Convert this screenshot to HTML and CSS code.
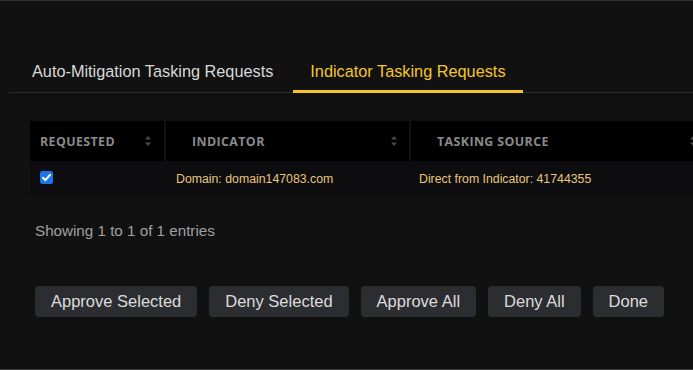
FILE: index.html
```html
<!DOCTYPE html>
<html>
<head>
<meta charset="utf-8">
<link rel="stylesheet" href="styles.css">
</head>
<body>
<div class="page">
  <div class="tabs">
    <div class="tab">Auto-Mitigation Tasking Requests</div>
    <div class="tab active">Indicator Tasking Requests</div>
  </div>
  <div class="table-wrap">
    <table class="grid">
      <colgroup>
        <col class="c1"><col class="c2"><col class="c3">
      </colgroup>
      <thead>
        <tr>
          <th><span class="th-in first">REQUESTED<svg class="sort" width="6" height="12" viewBox="0 0 6 12"><path d="M3 1 L6 4.5 L0 4.5 Z M3 11 L6 7.5 L0 7.5 Z" fill="#4a4a4a"/></svg></span></th>
          <th class="sep"><span class="th-in">INDICATOR<svg class="sort" width="6" height="12" viewBox="0 0 6 12"><path d="M3 1 L6 4.5 L0 4.5 Z M3 11 L6 7.5 L0 7.5 Z" fill="#4a4a4a"/></svg></span></th>
          <th class="sep"><span class="th-in">TASKING SOURCE<svg class="sort" width="6" height="12" viewBox="0 0 6 12"><path d="M3 1 L6 4.5 L0 4.5 Z M3 11 L6 7.5 L0 7.5 Z" fill="#4a4a4a"/></svg></span></th>
        </tr>
      </thead>
      <tbody>
        <tr>
          <td class="d1"><svg class="check" width="13" height="13" viewBox="0 0 13 13"><rect x="0" y="0" width="13" height="13" rx="2.5" fill="#1a74ea"/><path d="M3 6.8 L5.4 9.2 L10 3.8" stroke="#fff" stroke-width="2" fill="none" stroke-linecap="round" stroke-linejoin="round"/></svg></td>
          <td class="d2">Domain: domain147083.com</td>
          <td class="d3">Direct from Indicator: 41744355</td>
        </tr>
      </tbody>
    </table>
  </div>
  <div class="info">Showing 1 to 1 of 1 entries</div>
  <div class="actions">
    <button class="btn">Approve Selected</button>
    <button class="btn">Deny Selected</button>
    <button class="btn">Approve All</button>
    <button class="btn">Deny All</button>
    <button class="btn">Done</button>
  </div>
</div>
</body>
</html>
```
FILE: styles.css
```css
html, body {
  margin: 0;
  padding: 0;
  background: #111111;
}
body {
  width: 693px;
  height: 370px;
  overflow: hidden;
  font-family: "Liberation Sans", Arial, sans-serif;
}
.page {
  box-sizing: border-box;
  height: 370px;
  border-top: 1px solid #2e2e2e;
  border-bottom: 1px solid #3a3a3a;
  background: #111111;
  overflow: hidden;
}
.tabs {
  display: flex;
  gap: 3px;
  margin: 50px 0 0 7px;
  padding-left: 8px;
  border-bottom: 1px solid #2a2a2a;
  border-bottom-left-radius: 3px;
}
.tab {
  padding: 10px 17px 9px;
  line-height: 20px;
  font-size: 16.3px;
  color: #d8d8d8;
  border-bottom: 3px solid transparent;
  margin-bottom: -1px;
  white-space: nowrap;
}
.tab.active {
  color: #f6c628;
  border-bottom-color: #f6c628;
}
.table-wrap {
  margin: 28px 0 0 30px;
  width: 720px;
}
.grid {
  border-collapse: separate;
  border-spacing: 0;
  table-layout: fixed;
  width: 678px;
}
.c1 { width: 134px; }
.c2 { width: 245px; }
.c3 { width: 299px; }
.grid th {
  background: #000000;
  height: 40px;
  padding: 0;
  text-align: left;
  font-family: "Open Sans", sans-serif;
  font-weight: 700;
  font-size: 12.4px;
  letter-spacing: 0.4px;
  color: #8a8a8a;
}
.grid th.sep {
  border-left: 2px solid #121212;
}
.th-in {
  display: flex;
  align-items: center;
  justify-content: space-between;
  padding: 0 12px 0 26px;
}
.th-in.first { padding-left: 10px; padding-right: 13px; }
.sort { display: block; }
.grid td {
  background: #0d0d10;
  height: 34px;
  padding: 0;
  padding-top: 1px;
  font-size: 12.3px;
  color: #e8c67c;
  white-space: nowrap;
}
.grid td.d1 { padding-left: 10px; }
.grid td.d2 { padding-left: 12px; }
.grid td.d3 { padding-left: 10px; }
.check { display: block; margin-top: -4px; }
.info {
  margin: 26px 0 0 35px;
  font-size: 15.2px;
  line-height: 18px;
  color: #a0a0a0;
}
.actions {
  display: flex;
  gap: 12px;
  margin: 46px 0 0 35px;
}
.btn {
  height: 31px;
  padding: 0 16px;
  border: none;
  border-radius: 4px;
  background: #2c2d31;
  color: #dcdcdc;
  font-family: "Liberation Sans", Arial, sans-serif;
  font-size: 16.5px;
  white-space: nowrap;
}
```
